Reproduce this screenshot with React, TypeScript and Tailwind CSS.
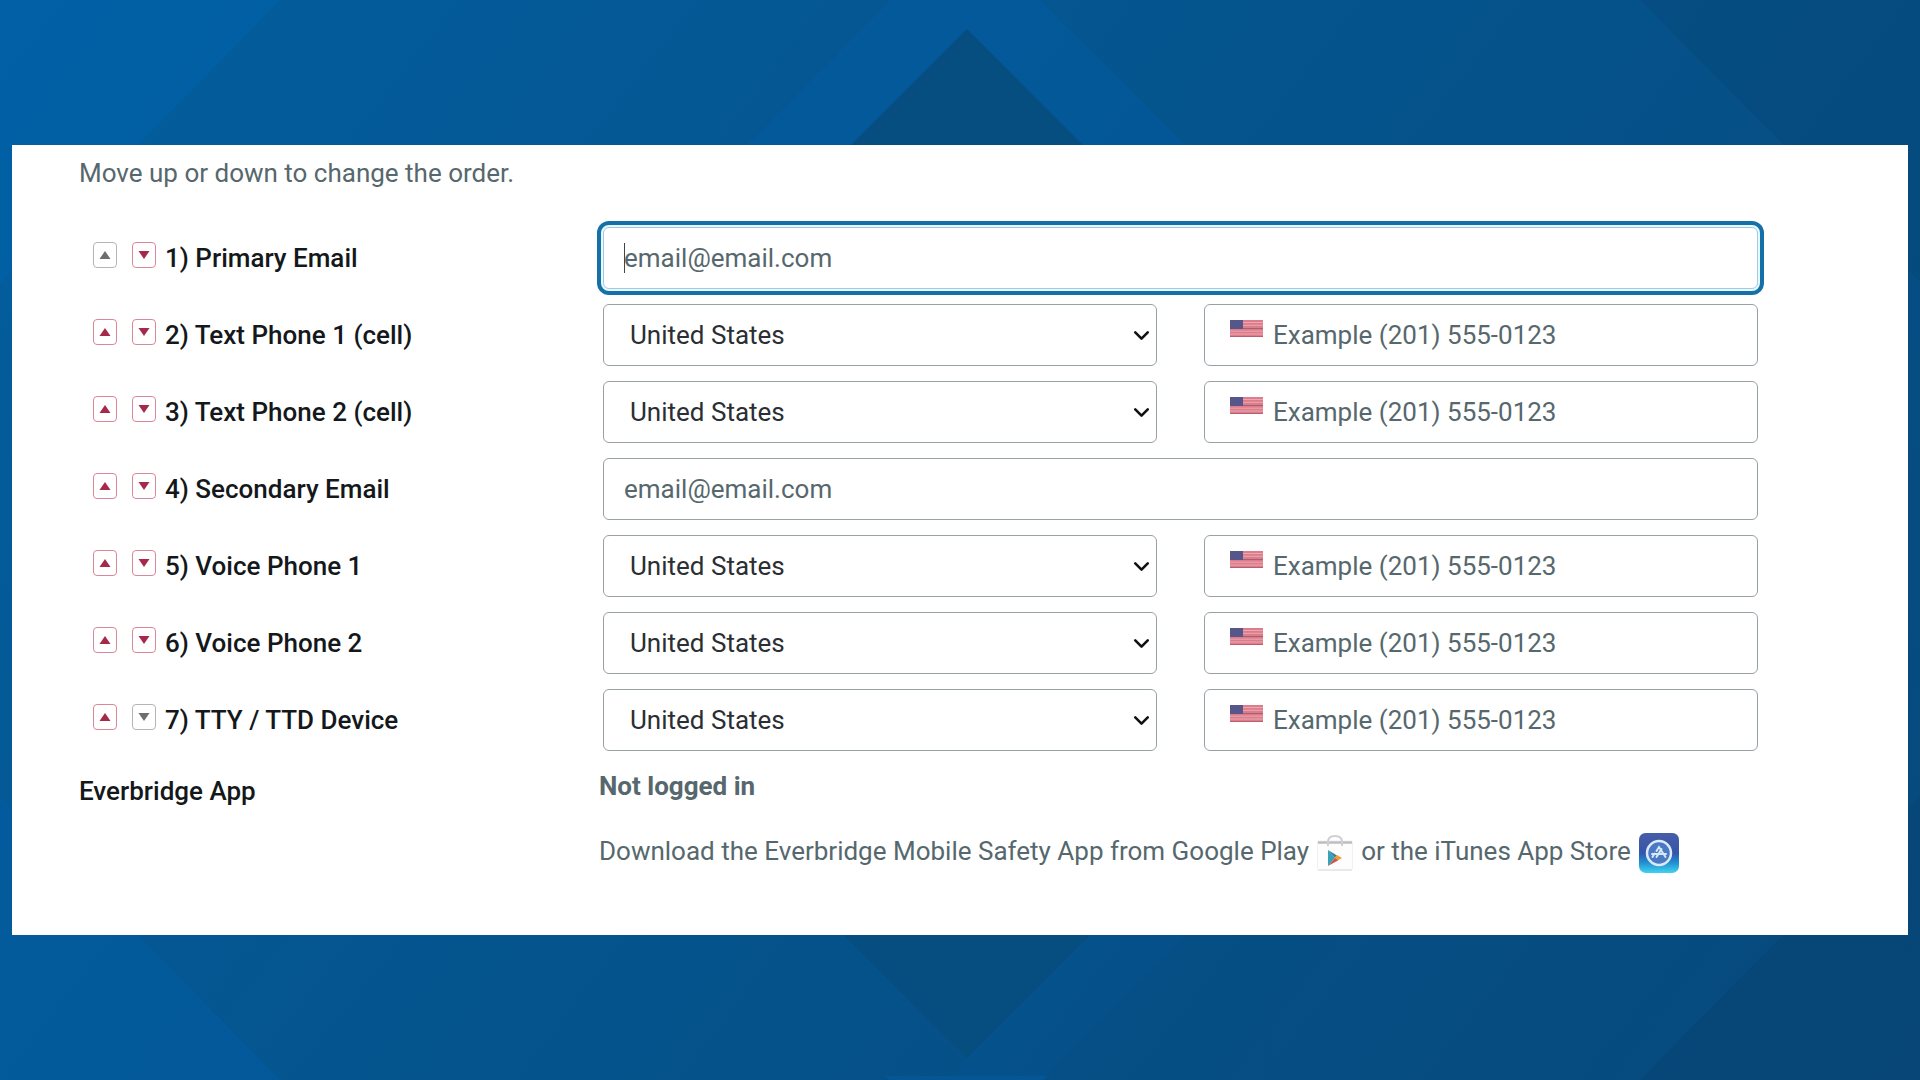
import { ChevronDown } from "lucide-react";

type Contact = {
  id: string;
  label: string;
  kind: "email" | "phone";
};

const contacts: Contact[] = [
  { id: "primary-email", label: "Primary Email", kind: "email" },
  { id: "text-phone-1", label: "Text Phone 1 (cell)", kind: "phone" },
  { id: "text-phone-2", label: "Text Phone 2 (cell)", kind: "phone" },
  { id: "secondary-email", label: "Secondary Email", kind: "email" },
  { id: "voice-phone-1", label: "Voice Phone 1", kind: "phone" },
  { id: "voice-phone-2", label: "Voice Phone 2", kind: "phone" },
  { id: "tty-device", label: "TTY / TTD Device", kind: "phone" },
];

function Backdrop() {
  return (
    <svg
      className="absolute inset-0 -z-10 h-full w-full"
      viewBox="0 0 1920 1080"
      preserveAspectRatio="none"
      aria-hidden="true"
    >
      <defs>
        <linearGradient id="base" gradientUnits="userSpaceOnUse" x1="0" y1="0" x2="1920" y2="1500">
          <stop offset="0" stopColor="#035e9e" />
          <stop offset="1" stopColor="#074677" />
        </linearGradient>
      </defs>
      <rect width="1920" height="1080" fill="url(#base)" />
      <path d="M0 0H281L0 284Z" fill="#0064b4" fillOpacity=".35" />
      <path d="M0 796L281 1080H0Z" fill="#0064b4" fillOpacity=".25" />
      <path d="M1640 0H1920V282Z" fill="#053a5c" fillOpacity=".14" />
      <path d="M1920 796V1080H1640Z" fill="#0a3450" fillOpacity=".12" />
      {/* chevron band around the centre diamond */}
      <path d="M891 0H1040L1583 543L1487 639L967 119L447 639L351 543Z" fill="#0064b4" fillOpacity=".22" />
      <path d="M967 29L1481 543L967 1058L453 543Z" fill="#064d80" />
      <path d="M1090 935H1185L1040 1080H945Z" fill="#065291" fillOpacity=".4" />
      <path d="M885 1076H1048L1044 1080H889Z" fill="#05589a" fillOpacity=".7" />
    </svg>
  );
}

function MoveButton({ direction, label, disabled }: { direction: "up" | "down"; label: string; disabled: boolean }) {
  return (
    <button
      type="button"
      disabled={disabled}
      aria-label={`Move ${label} ${direction}`}
      className="flex h-[26px] w-6 items-center justify-center rounded border border-[#dc8799] bg-white text-[#a52a49] disabled:border-[#b5b5b5] disabled:text-[#6e6e6e]"
    >
      <svg width="12" height="8" viewBox="0 0 12 8" fill="currentColor" aria-hidden="true">
        {direction === "up" ? <path d="M6 0L11.5 8H.5Z" /> : <path d="M.5 0H11.5L6 8Z" />}
      </svg>
    </button>
  );
}

function UsFlag() {
  return (
    <svg
      className="pointer-events-none absolute top-4 left-[26px]"
      width="33"
      height="17"
      viewBox="0 0 33 17"
      aria-hidden="true"
    >
      <rect width="33" height="17" fill="#dd7c8a" />
      <path d="M0 2.5H33M0 5.3H33M0 11.2H33M0 14H33" stroke="#eaa9b2" strokeWidth="1" />
      <path d="M0 8.5H33" stroke="#a8606f" strokeWidth="1" />
      <path d="M0 16.5H33" stroke="#bd5c70" strokeWidth="1" />
      <rect width="13" height="9" fill="#56568a" />
    </svg>
  );
}

function GooglePlayIcon() {
  return (
    <svg width="36" height="36" viewBox="0 0 36 36" aria-hidden="true">
      <rect x=".5" y="6" width="35" height="29" rx="1" fill="#fdfdfe" stroke="#f1f1f4" />
      <path d="M1 35H35" stroke="#e4e4e8" strokeWidth="1.5" />
      <path d="M1 7.5H35" stroke="#bdbdc2" strokeWidth="2.5" />
      <path d="M11 11V7C11 3 14 1 18 1S25 3 25 7V11" fill="none" stroke="#cfcfd3" strokeWidth="2" />
      <path d="M11 15V31L18 23Z" fill="#35a3b8" />
      <path d="M11 15L20 20.500L18 23Z" fill="#397f9c" />
      <path d="M20 20L25 23L20 26L17 23Z" fill="#e9a13c" />
      <path d="M11 31L18 23L21 25.500Z" fill="#d4524b" />
    </svg>
  );
}

function AppStoreIcon() {
  return (
    <svg width="40" height="40" viewBox="0 0 40 40" aria-hidden="true">
      <defs>
        <linearGradient id="store" x1="0" y1="0" x2="0" y2="1">
          <stop offset="0" stopColor="#5068ac" />
          <stop offset=".5" stopColor="#2b59ae" />
          <stop offset=".72" stopColor="#2289cd" />
          <stop offset="1" stopColor="#3fd4f0" />
        </linearGradient>
      </defs>
      <rect width="40" height="40" rx="7" fill="url(#store)" />
      <path d="M0 20Q20 28 40 20V7Q40 0 33 0H7Q0 0 0 7Z" fill="#3d52a5" fillOpacity=".5" />
      <circle cx="20" cy="20" r="12" fill="#4a78c2" stroke="#dbe9fa" strokeWidth="2.5" />
      <path
        d="M13.500 24L15.500 20.500M17.500 18L20 14L26.500 24M13 21H27M17.500 24L22.500 16"
        fill="none"
        stroke="#d5e7fb"
        strokeWidth="2"
        strokeLinecap="round"
      />
    </svg>
  );
}

function EmailField({ id, focused }: { id: string; focused: boolean }) {
  return (
    <div className="relative">
      <input
        id={id}
        type="email"
        placeholder="email@email.com"
        className={
          focused
            ? "block h-[62px] w-full rounded-md border border-[#a9c6e6] bg-white px-5 text-[#222] caret-transparent outline-4 outline-offset-2 outline-[#1670a8] ring-2 ring-[#e2fbff] placeholder:text-[#56686d]"
            : "block h-[62px] w-full rounded-md border border-[#98a1a5] bg-white px-5 text-[#222] placeholder:text-[#56686d]"
        }
      />
      {focused && <span className="pointer-events-none absolute top-4 left-[21px] h-[30px] w-px bg-[#444]" />}
    </div>
  );
}

function PhoneField({ id, label }: { id: string; label: string }) {
  return (
    <div className="grid grid-cols-2 gap-x-[47px]">
      <div className="relative">
        <select
          aria-label={`${label} country`}
          className="block h-[62px] w-full appearance-none rounded-md border border-[#98a1a5] bg-white pr-12 pl-[26px] text-[#2b2f33]"
        >
          <option>United States</option>
        </select>
        <ChevronDown
          size={25}
          strokeWidth={2.5}
          className="pointer-events-none absolute top-[19px] right-[3px] text-[#111]"
          aria-hidden="true"
        />
      </div>
      <div className="relative">
        <input
          id={id}
          type="tel"
          placeholder="Example (201) 555-0123"
          className="block h-[62px] w-full rounded-md border border-[#98a1a5] bg-white pr-4 pl-[68px] text-[#222] placeholder:text-[#56686d]"
        />
        <UsFlag />
      </div>
    </div>
  );
}

export default function App() {
  return (
    <div className="relative isolate flex min-h-screen flex-col justify-center overflow-hidden px-3 font-['Roboto',sans-serif] text-[26px] leading-8 text-[#56686d]">
      <Backdrop />
      <main className="bg-white pt-3 pr-[150px] pb-[62px] pl-[67px]">
        <p>Move up or down to change the order.</p>

        <form className="mt-[38px] flex flex-col gap-[15px]">
          {contacts.map((contact, i) => (
            <div key={contact.id} className="grid grid-cols-[524px_1fr] items-center">
              <div className="flex items-center pl-[14px]">
                <div className="flex gap-[15px] pb-1.5">
                  <MoveButton direction="up" label={contact.label} disabled={i === 0} />
                  <MoveButton direction="down" label={contact.label} disabled={i === contacts.length - 1} />
                </div>
                <label htmlFor={contact.id} className="pl-[9px] font-medium text-[#14181b]">
                  {i + 1}) {contact.label}
                </label>
              </div>
              {contact.kind === "email" ? (
                <EmailField id={contact.id} focused={i === 0} />
              ) : (
                <PhoneField id={contact.id} label={contact.label} />
              )}
            </div>
          ))}
        </form>

        <section className="mt-[19px] grid grid-cols-[520px_1fr]">
          <h2 className="pt-[5px] font-medium text-[#14181b]">Everbridge App</h2>
          <div>
            <p className="font-bold">Not logged in</p>
            <p className="mt-[31px] flex h-10 items-center whitespace-nowrap">
              <span className="pb-1">Download the Everbridge Mobile Safety App from Google Play</span>
              <a href="#google-play" aria-label="Google Play" className="mx-2">
                <GooglePlayIcon />
              </a>
              <span className="pb-1">or the iTunes App Store</span>
              <a href="#app-store" aria-label="iTunes App Store" className="ml-2">
                <AppStoreIcon />
              </a>
            </p>
          </div>
        </section>
      </main>
    </div>
  );
}
